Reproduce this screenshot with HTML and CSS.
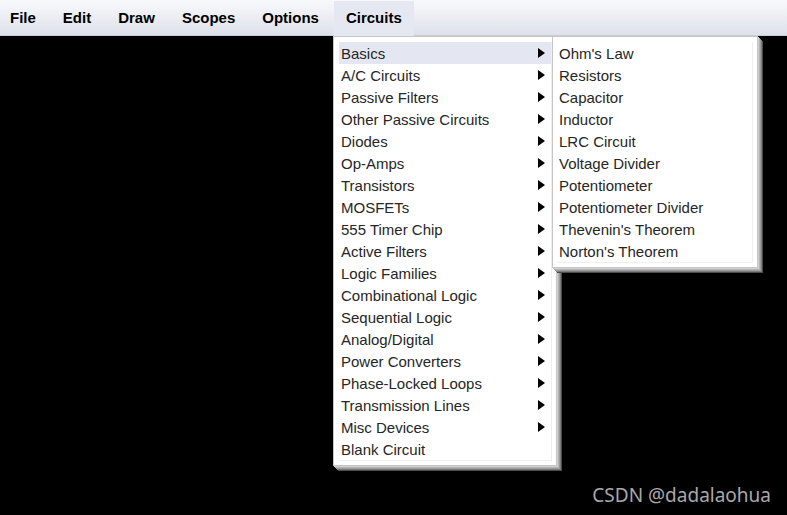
FILE: index.html
```html
<!DOCTYPE html>
<html lang="en">
<head>
    <meta charset="UTF-8">
    <meta name="viewport" content="width=device-width, initial-scale=1.0">
    <title>Circuit Simulator</title>
    <link rel="stylesheet" href="styles.css">
</head>
<body>
    <div class="menubar">
        <div class="bar-item">File</div>
        <div class="bar-item">Edit</div>
        <div class="bar-item">Draw</div>
        <div class="bar-item">Scopes</div>
        <div class="bar-item">Options</div>
        <div class="bar-item open">Circuits</div>
    </div>

    <div class="canvas"></div>

    <div class="menu main-menu">
        <div class="menu-list">
            <div class="menu-item selected">Basics<span class="arrow"></span></div>
            <div class="menu-item">A/C Circuits<span class="arrow"></span></div>
            <div class="menu-item">Passive Filters<span class="arrow"></span></div>
            <div class="menu-item">Other Passive Circuits<span class="arrow"></span></div>
            <div class="menu-item">Diodes<span class="arrow"></span></div>
            <div class="menu-item">Op-Amps<span class="arrow"></span></div>
            <div class="menu-item">Transistors<span class="arrow"></span></div>
            <div class="menu-item">MOSFETs<span class="arrow"></span></div>
            <div class="menu-item">555 Timer Chip<span class="arrow"></span></div>
            <div class="menu-item">Active Filters<span class="arrow"></span></div>
            <div class="menu-item">Logic Families<span class="arrow"></span></div>
            <div class="menu-item">Combinational Logic<span class="arrow"></span></div>
            <div class="menu-item">Sequential Logic<span class="arrow"></span></div>
            <div class="menu-item">Analog/Digital<span class="arrow"></span></div>
            <div class="menu-item">Power Converters<span class="arrow"></span></div>
            <div class="menu-item">Phase-Locked Loops<span class="arrow"></span></div>
            <div class="menu-item">Transmission Lines<span class="arrow"></span></div>
            <div class="menu-item">Misc Devices<span class="arrow"></span></div>
            <div class="menu-item">Blank Circuit</div>
        </div>
    </div>

    <div class="menu sub-menu">
        <div class="menu-list">
            <div class="menu-item">Ohm's Law</div>
            <div class="menu-item">Resistors</div>
            <div class="menu-item">Capacitor</div>
            <div class="menu-item">Inductor</div>
            <div class="menu-item">LRC Circuit</div>
            <div class="menu-item">Voltage Divider</div>
            <div class="menu-item">Potentiometer</div>
            <div class="menu-item">Potentiometer Divider</div>
            <div class="menu-item">Thevenin's Theorem</div>
            <div class="menu-item">Norton's Theorem</div>
        </div>
    </div>

    <div class="watermark">CSDN @dadalaohua</div>
</body>
</html>
```

FILE: styles.css
```css
html, body {
    height: 100%;
}
body {
    margin: 0;
    background: #000;
    font-family: 'Liberation Sans', Arial, sans-serif;
    overflow: hidden;
}
.menubar {
    display: flex;
    gap: 3px;
    height: 36px;
    margin-left: -2px;
    background: linear-gradient(#f9f9fc, #dee1ea);
    border-bottom: 1px solid #c9ccd6;
    box-sizing: border-box;
}
.bar-item {
    margin-top: 1px;
    padding: 0 12px;
    line-height: 34px;
    font-size: 15px;
    font-weight: bold;
    color: #000;
}
.bar-item.open {
    background: #e6e8f1;
    height: 35px;
}
.canvas {
    height: calc(100% - 37px);
}
.menu {
    position: absolute;
    top: 36px;
    background: #fff;
    border: 1px solid #c6c6c6;
    padding: 5px 4px 4px 5px;
    /* stepped grey shadow, as the old GWT popups had */
    box-shadow: 1px 1px 0 #d0d0d0, 2px 2px 0 #b4b4b4, 3px 3px 0 #9c9c9c,
                4px 4px 0 #7c7c7c, 5px 5px 0 #4c4c4c;
}
.main-menu {
    left: 333px;
    z-index: 1;
}
.sub-menu {
    left: 552px;
    z-index: 2;
    padding-left: 4px;
}
.menu-list {
    border-right: 1px solid #efefef;
    border-bottom: 1px solid #efefef;
}
.main-menu .menu-list {
    width: 212px;
}
.sub-menu .menu-list {
    width: 195px;
}
.menu-item {
    display: flex;
    justify-content: space-between;
    align-items: center;
    height: 22px;
    padding: 0 6px 0 2px;
    font-size: 15px;
    color: #262626;
    white-space: nowrap;
}
.menu-item.selected {
    background: #e4e7f2;
}
.arrow {
    width: 0;
    height: 0;
    margin-top: -1px;
    border-left: 7px solid #000;
    border-top: 5px solid transparent;
    border-bottom: 5px solid transparent;
}
.watermark {
    position: absolute;
    right: 16px;
    bottom: 7px;
    font-family: 'Noto Sans', sans-serif;
    font-size: 19px;
    color: #a9a9a9;
}
```
